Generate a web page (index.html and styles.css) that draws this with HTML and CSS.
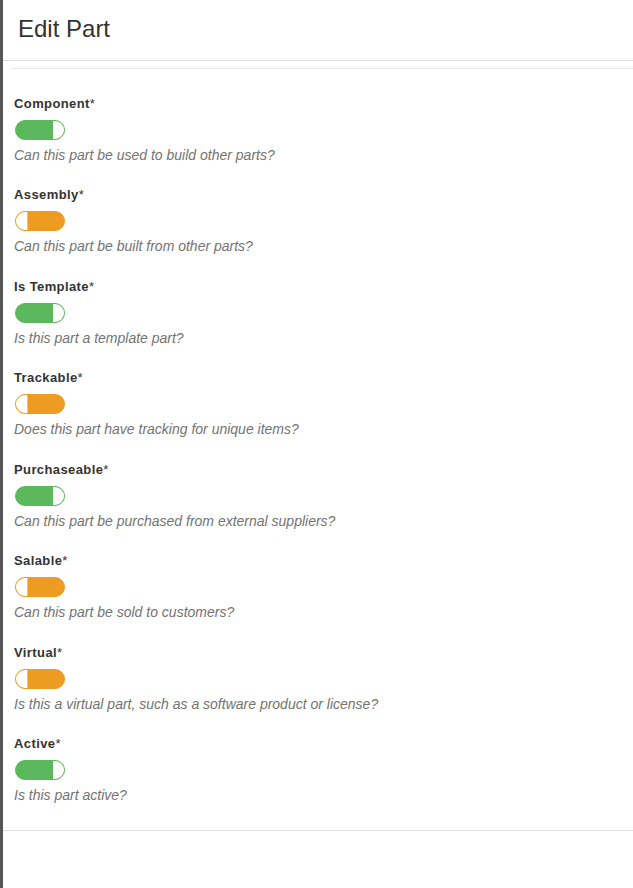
FILE: index.html
```html
<!DOCTYPE html>
<html>
<head>
<meta charset="utf-8">
<link rel="stylesheet" href="styles.css">
</head>
<body>
<div class="page">
  <div class="backdrop"></div>
  <div class="modal">
    <div class="modal-header">
      <h4 class="title">Edit Part</h4>
    </div>
    <div class="modal-body">
      <hr class="form-rule">
      <div class="group">
        <div class="label">Component<span class="req">*</span></div>
        <div class="switch on"><span class="knob"></span></div>
        <div class="help">Can this part be used to build other parts?</div>
      </div>
      <div class="group">
        <div class="label">Assembly<span class="req">*</span></div>
        <div class="switch off"><span class="knob"></span></div>
        <div class="help">Can this part be built from other parts?</div>
      </div>
      <div class="group">
        <div class="label">Is Template<span class="req">*</span></div>
        <div class="switch on"><span class="knob"></span></div>
        <div class="help">Is this part a template part?</div>
      </div>
      <div class="group">
        <div class="label">Trackable<span class="req">*</span></div>
        <div class="switch off"><span class="knob"></span></div>
        <div class="help">Does this part have tracking for unique items?</div>
      </div>
      <div class="group">
        <div class="label">Purchaseable<span class="req">*</span></div>
        <div class="switch on"><span class="knob"></span></div>
        <div class="help">Can this part be purchased from external suppliers?</div>
      </div>
      <div class="group">
        <div class="label">Salable<span class="req">*</span></div>
        <div class="switch off"><span class="knob"></span></div>
        <div class="help">Can this part be sold to customers?</div>
      </div>
      <div class="group">
        <div class="label">Virtual<span class="req">*</span></div>
        <div class="switch off"><span class="knob"></span></div>
        <div class="help">Is this a virtual part, such as a software product or license?</div>
      </div>
      <div class="group">
        <div class="label">Active<span class="req">*</span></div>
        <div class="switch on"><span class="knob"></span></div>
        <div class="help">Is this part active?</div>
      </div>
    </div>
    <div class="modal-footer"></div>
  </div>
</div>
</body>
</html>
```

FILE: styles.css
```css
html, body {
  margin: 0;
  padding: 0;
  background: #ffffff;
}
body {
  font-family: "Liberation Sans", Arial, sans-serif;
  color: #333333;
}
.page {
  display: flex;
  width: 633px;
  height: 888px;
  overflow: hidden;
}
.backdrop {
  width: 3px;
  flex: none;
  background: #565656;
}
.modal {
  flex: 1;
  background: #ffffff;
  display: flex;
  flex-direction: column;
}
.modal-header {
  height: 61px;
  border-bottom: 1px solid #dddddd;
  box-sizing: border-box;
  padding: 15px 15px 0 15px;
}
.title {
  margin: 0;
  font-size: 24px;
  font-weight: normal;
  line-height: 28px;
  color: #333333;
}
.modal-body {
  padding: 0 0 0 8px;
}
.form-rule {
  margin: 7px 0 0 0;
  border: 0;
  border-top: 1px solid #eaeaea;
  height: 0;
}
.group {
  padding-left: 3px;
  height: 91.43px;
}
.group:first-of-type {
  margin-top: 25px;
}
.label {
  font-size: 13px;
  font-weight: bold;
  line-height: 20px;
  color: #333333;
  letter-spacing: 0.4px;
}
.req {
  font-weight: normal;
}
.switch {
  margin-top: 6px;
  margin-left: 1px;
  width: 50px;
  height: 20px;
  box-sizing: border-box;
  border-radius: 10px;
  overflow: hidden;
  display: flex;
}
.switch.on {
  background: #5cb85c;
  border: 1px solid #5cb85c;
  justify-content: flex-end;
}
.switch.off {
  background: #ee9b22;
  border: 1px solid #ee9b22;
  justify-content: flex-start;
}
.knob {
  width: 11px;
  height: 100%;
  background: #ffffff;
}
.switch.off .knob {
  border-right: 1px solid #c9c9c9;
}
.help {
  margin-top: 5px;
  font-size: 14px;
  font-style: italic;
  line-height: 20px;
  color: #737373;
}
.modal-footer {
  margin-top: auto;
  margin-bottom: 57px;
  border-top: 1px solid #dddddd;
}
```
